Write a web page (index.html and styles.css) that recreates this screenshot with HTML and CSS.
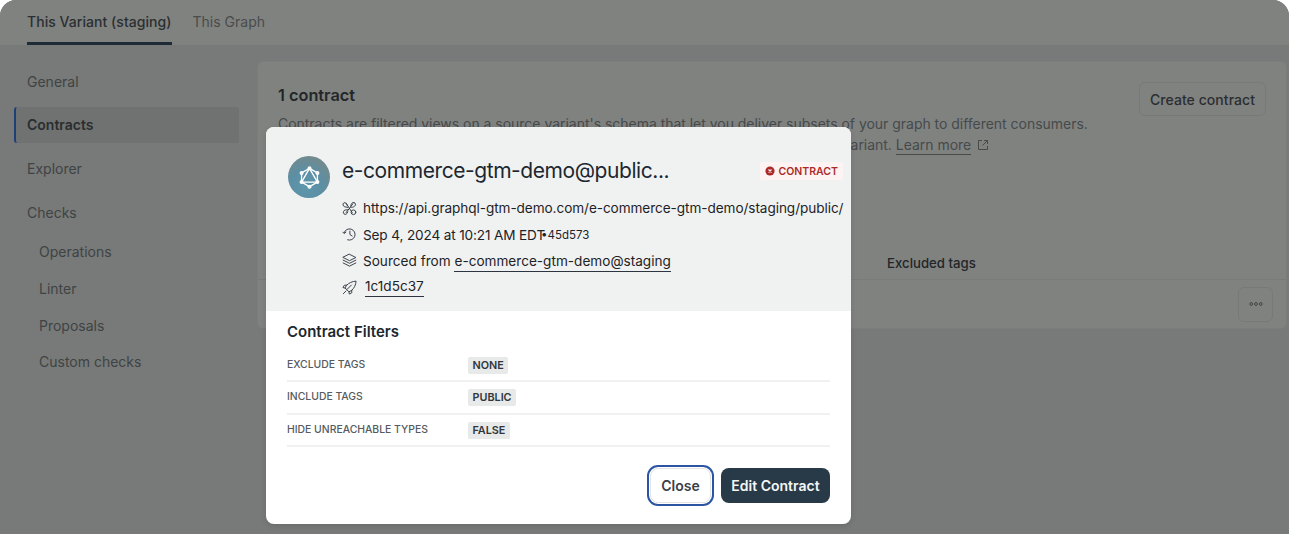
FILE: index.html
```html
<!DOCTYPE html>
<html lang="en">
<head>
<meta charset="utf-8">
<title>Contracts</title>
<link rel="stylesheet" href="styles.css">
</head>
<body>
<div class="app">
  <header class="tabs">
    <a class="tab tab-active">This Variant (staging)</a>
    <a class="tab">This Graph</a>
  </header>
  <div class="main">
    <nav class="side">
      <a class="nav">General</a>
      <a class="nav nav-active">Contracts</a>
      <a class="nav">Explorer</a>
      <a class="nav">Checks</a>
      <div class="subnav">
        <a class="sub">Operations</a>
        <a class="sub">Linter</a>
        <a class="sub">Proposals</a>
        <a class="sub">Custom checks</a>
      </div>
    </nav>
    <section class="card">
      <div class="card-top">
        <div class="card-copy">
          <h2 class="card-title">1 contract</h2>
          <p class="card-desc">Contracts are filtered views on a source variant's schema that let you deliver subsets of your graph to different consumers. Each contract's schema updates automatically once you publish changes to a source variant. <a class="learn">Learn more</a>
            <svg class="ext" viewBox="0 0 12 12"><path d="M5 1.5H1.5v9h9V7M7 1.5h3.5V5M10.5 1.5 5.5 6.5"/></svg></p>
        </div>
        <button class="btn-create">Create contract</button>
      </div>
      <div class="thead"><span class="th">Excluded tags</span></div>
      <div class="trow">
        <button class="btn-more"><svg viewBox="0 0 14 4" class="dots"><circle cx="2.2" cy="2" r="1.4"/><circle cx="7" cy="2" r="1.4"/><circle cx="11.8" cy="2" r="1.4"/></svg></button>
      </div>
    </section>
  </div>
</div>

<div class="modal">
  <div class="m-head">
    <div class="avatar">
      <svg viewBox="0 0 24 24" class="gql"><path d="M12 3.2 19.6 7.6V16.4L12 20.8 4.4 16.4V7.6Z"/><path d="M12 3.2 19.6 16.4H4.4Z"/><circle cx="12" cy="3.2" r="1.3"/><circle cx="19.6" cy="7.6" r="1.3"/><circle cx="19.6" cy="16.4" r="1.3"/><circle cx="12" cy="20.8" r="1.3"/><circle cx="4.4" cy="16.4" r="1.3"/><circle cx="4.4" cy="7.6" r="1.3"/></svg>
    </div>
    <div class="m-info">
      <div class="m-titlerow">
        <h1 class="m-title">e-commerce-gtm-demo@public...</h1>
        <span class="badge"><svg viewBox="0 0 12 12" class="badge-ic"><circle cx="6" cy="6" r="5.5"/><path d="M4.2 4.2 7.8 7.8M7.8 4.2 4.2 7.8"/></svg>CONTRACT</span>
      </div>
      <div class="m-line">
        <svg class="ic" viewBox="0 0 16 16"><path d="M4.5 2.6 11 12.6M11.6 3 4.4 12.4"/><path d="M5.6 4.6C5.2 2.6 3.4 1 1.9 2S1 5.6 3 6.2L6 6.8"/><path d="M9.4 5.4C9.4 3 11 1.2 12.8 1.6S15 4.4 13.4 5.6 10.4 6.8 9.4 6.8"/><path d="M6.2 9.4 3.4 9.6C1.4 10 .8 12.6 2.2 13.8S5.6 14 6.2 11.6"/><circle cx="12.2" cy="12" r="2.5"/></svg>
        <span class="url">https://api.graphql-gtm-demo.com/e-commerce-gtm-demo/staging/public/</span>
      </div>
      <div class="m-line">
        <svg class="ic" viewBox="0 0 16 16"><path d="M2.2 6.2A6 6 0 1 1 6 13.7M.8 5.4 2.4 7 4.2 5.4M8.4 4.4V8l2.4 1.6"/></svg>
        <span class="date">Sep 4, 2024 at 10:21 AM EDT</span><span class="hash">•45d573</span>
      </div>
      <div class="m-line">
        <svg class="ic" viewBox="0 0 16 16"><path d="M8 1.4 14.8 4.8 8 8.2 1.2 4.8ZM1.2 7.6 8 11 14.8 7.6M1.2 10.6 8 14 14.8 10.6"/></svg>
        <span>Sourced from <a class="ulink">e-commerce-gtm-demo@staging</a></span>
      </div>
      <div class="m-line">
        <svg class="ic" viewBox="0 0 16 16"><path d="M5 5.5C7.5 3 11 1.4 15 1.2 14.8 5.2 13 8.6 10.4 11L7.4 12.6 3.6 8.8ZM5 5.5H2.6L1 8l2.6.8M10.4 11V13.6L7.8 15 7.4 12.6M4.4 11.6 1.4 14.6M10 5.4 5.4 10"/></svg>
        <a class="ulink ulink-id">1c1d5c37</a>
      </div>
    </div>
  </div>
  <div class="m-body">
    <h3 class="f-title">Contract Filters</h3>
    <div class="f-row"><span class="f-label">EXCLUDE TAGS</span><span class="tag">NONE</span></div>
    <div class="f-row"><span class="f-label">INCLUDE TAGS</span><span class="tag">PUBLIC</span></div>
    <div class="f-row"><span class="f-label">HIDE UNREACHABLE TYPES</span><span class="tag">FALSE</span></div>
    <div class="m-actions">
      <button class="btn-close">Close</button>
      <button class="btn-edit">Edit Contract</button>
    </div>
  </div>
</div>
</body>
</html>
```
FILE: styles.css
```css
* { box-sizing: border-box; }
html, body { margin: 0; height: 534px; overflow: hidden; background: #fff; }
body { font-family: Inter, "Liberation Sans", sans-serif; position: relative; color: #2d3034; }
h1, h2, h3, p { margin: 0; }
button { font-family: inherit; }

.app { width: 1289px; height: 534px; background: #777a78; border-radius: 16px 16px 0 0; overflow: hidden; display: flex; flex-direction: column; }

.tabs { height: 46px; flex: none; background: #808280; border-bottom: 1px solid #767977; display: flex; gap: 21px; padding-left: 27px; }
.tab { font-size: 14px; line-height: 44px; height: 45px; color: #484c4c; }
.tab-active { color: #2b2f31; font-weight: 500; border-bottom: 3px solid #1e2a35; letter-spacing: .05px; }

.main { flex: 1; display: flex; padding: 15px 2px 0 14px; gap: 18px; align-items: flex-start; }
.side { width: 225px; flex: none; display: flex; flex-direction: column; margin-top: 2px; }
.nav { font-size: 14px; height: 36px; line-height: 37px; margin-bottom: 7.7px; color: #3f4344; border-left: 2px solid transparent; padding-left: 11px; border-radius: 3px; }
.nav-active { background: #6f7270; border-left-color: #1f3f78; font-weight: 600; color: #2a2d2f; line-height: 36px; }
.subnav { display: flex; flex-direction: column; margin-top: -3.4px; }
.sub { font-size: 14px; line-height: 20px; padding: 8px 0 8.6px 25px; color: #3f4344; }

.card { flex: 1; height: 268px; background: #808280; border: 1px solid #7a7d7b; border-radius: 6px; display: flex; flex-direction: column; }
.card-top { display: flex; justify-content: space-between; align-items: flex-start; padding: 20px 20px 0; height: 178px; position: relative; }
.card-copy { width: 830px; }
.card-title { font-size: 16.3px; line-height: 26px; font-weight: 600; color: #232628; margin-bottom: 5px; }
.card-desc { font-size: 14px; line-height: 21px; color: #464a4b; letter-spacing: -.025px; }
.learn { text-decoration: none; border-bottom: 1px solid #464a4b; padding-bottom: 1px; }
.ext { width: 12px; height: 12px; margin-left: 2px; vertical-align: -1px; fill: none; stroke: #464a4b; stroke-width: 1; }
.btn-create { width: 127px; height: 34px; background: transparent; border: 1px solid #777a78; border-radius: 6px; font-size: 14px; font-weight: 500; letter-spacing: .06px; color: #2b2e30; padding: 0; }
.thead { height: 40px; padding: 13px 0 0 629px; border-bottom: 1px solid #787b79; }
.th { font-size: 13.2px; line-height: 20px; font-weight: 500; color: #232628; display: block; }
.trow { flex: 1; display: flex; justify-content: flex-end; align-items: center; padding-right: 13px; }
.btn-more { width: 35px; height: 35px; background: transparent; border: 1px solid #777a78; border-radius: 6px; padding: 0; display: flex; align-items: center; justify-content: center; }
.dots { width: 14px; height: 4px; fill: none; stroke: #3c3f40; stroke-width: .9; }

.modal { position: absolute; left: 266px; top: 127px; width: 585px; height: 397px; background: #fff; border-radius: 8px; overflow: hidden; display: flex; flex-direction: column; box-shadow: 0 2px 6px rgba(0,0,0,.12); }
.m-head { height: 184px; background: #f0f2f2; padding: 29px 8px 0 22px; display: flex; gap: 12px; flex: none; }
.avatar { width: 42px; height: 42px; flex: none; border-radius: 50%; background: radial-gradient(circle at 42% 72%, #5f97ad 0, #5b8fa5 40%, #6f8a90 72%, #7a8a8a 100%); display: flex; align-items: center; justify-content: center; }
.gql { width: 25px; height: 25px; fill: none; stroke: #fff; stroke-width: 1.3; }
.m-info { flex: 1; min-width: 0; }
.m-titlerow { display: flex; justify-content: space-between; align-items: center; height: 30px; margin-bottom: 9px; }
.m-title { font-size: 21px; line-height: 30px; font-weight: 400; letter-spacing: -.43px; color: #1c2730; }
.badge { display: flex; align-items: center; gap: 4px; height: 18px; padding: 0 5px; background: #fdf3f2; border-radius: 3px; font-size: 10.5px; font-weight: 600; color: #ab2b2b; }
.badge-ic { width: 10px; height: 10px; fill: #ab2b2b; stroke: #fdf3f2; stroke-width: 1.4; }
.badge-ic circle { stroke: none; }
.m-line { display: flex; align-items: center; height: 26.4px; font-size: 13.6px; color: #1e2226; white-space: nowrap; }
.url { letter-spacing: -.07px; }
.date { letter-spacing: -.14px; }
.ic { width: 15px; height: 15px; margin-right: 6px; flex: none; fill: none; stroke: #3a4148; stroke-width: 1.05; stroke-linejoin: round; stroke-linecap: round; }
.hash { font-size: 11.5px; margin-left: -4px; }
.ulink { text-decoration: none; border-bottom: 1px solid #2d3540; padding-bottom: 2px; }
.ulink-id { margin-left: 2px; }

.m-body { flex: 1; padding: 11px 21px 0; display: flex; flex-direction: column; }
.f-title { font-size: 15px; line-height: 20px; font-weight: 600; color: #1c2730; margin-bottom: 8px; }
.f-row { display: flex; height: 32.4px; border-bottom: 2px solid #f0f2f2; align-items: flex-start; padding-top: 7px; }
.f-label { width: 181px; flex: none; margin-top: 1px; font-size: 10.4px; line-height: 14px; font-weight: 500; color: #555b60; }
.tag { background: #e8eaea; border-radius: 2px; font-size: 10.8px; line-height: 17px; font-weight: 600; color: #30363b; padding: 0 4.5px; }
.m-actions { display: flex; justify-content: flex-end; gap: 10px; margin-top: 21px; }
.btn-close { width: 61px; height: 35px; background: #fff; border: 1px solid #e3e5e5; border-radius: 8px; font-size: 14px; font-weight: 600; color: #3a4045; padding: 0; box-shadow: 0 0 0 1px #fff, 0 0 0 3px #2b55a3; }
.btn-edit { width: 109px; height: 35px; background: #283a48; border: 0; border-radius: 8px; font-size: 14px; font-weight: 600; color: #f4f6f6; padding: 0; }
```
